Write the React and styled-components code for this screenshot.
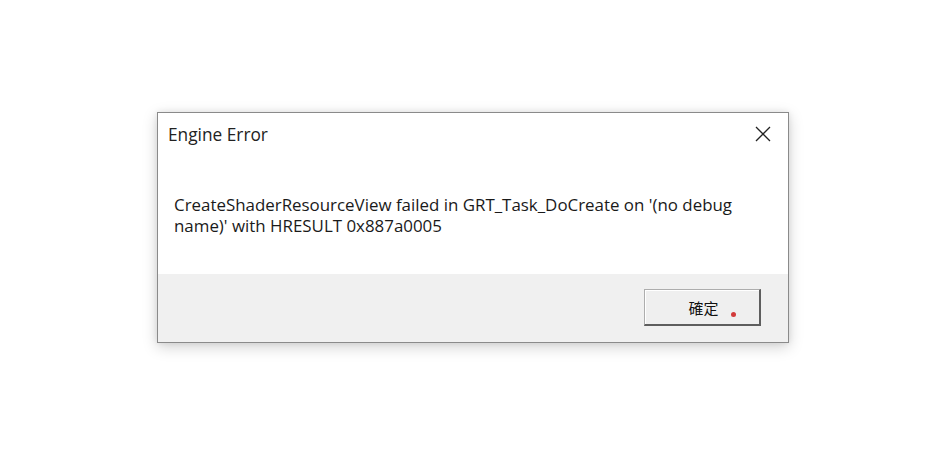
import React from "react";
import styled, { createGlobalStyle } from "styled-components";

const GlobalStyle = createGlobalStyle`
  html, body {
    margin: 0;
    padding: 0;
    background: #fff;
  }
  body {
    font-family: "Open Sans", "Noto Sans", "Noto Sans CJK TC", sans-serif;
  }
`;

function App() {
  return (
    <StPage>
      <GlobalStyle />
      <StDialog>
        <StBody>
          <StTitleBar>
            <StTitle>Engine Error</StTitle>
            <StCloseBtn aria-label="close">
              <svg width="16" height="16" viewBox="0 0 16 16">
                <path d="M1 1 L15 15 M15 1 L1 15" stroke="#222" strokeWidth="1.3" fill="none" />
              </svg>
            </StCloseBtn>
          </StTitleBar>
          <StMessage>
            CreateShaderResourceView failed in GRT_Task_DoCreate on '(no debug
            <br />
            name)' with HRESULT 0x887a0005
          </StMessage>
        </StBody>
        <StFooter>
          <StOkBtn>
            確定
            <StDot />
          </StOkBtn>
        </StFooter>
      </StDialog>
    </StPage>
  );
}

//styled-components
const StPage = styled.div`
  width: 944px;
  height: 455px;
  box-sizing: border-box;
  padding: 112px 0 0 157px;
`;

const StDialog = styled.div`
  width: 632px;
  height: 231px;
  box-sizing: border-box;
  border: 1px solid #8a8a8a;
  background: #f0f0f0;
  display: flex;
  flex-direction: column;
  box-shadow: 0 4px 14px rgba(0, 0, 0, 0.18), 0 0 6px rgba(0, 0, 0, 0.08);
`;

const StBody = styled.div`
  background: #fff;
  height: 161px;
  display: flex;
  flex-direction: column;
`;

const StTitleBar = styled.div`
  display: flex;
  justify-content: space-between;
  align-items: center;
  height: 42px;
  padding: 0 17px 0 10px;
`;

const StTitle = styled.div`
  font-size: 17.3px;
  color: #222;
`;

const StCloseBtn = styled.div`
  width: 16px;
  height: 16px;
  display: flex;
`;

const StMessage = styled.div`
  margin-top: 39px;
  padding-left: 16px;
  font-size: 16.9px;
  line-height: 21px;
  color: #1a1a1a;
`;

const StFooter = styled.div`
  flex: 1;
  display: flex;
  justify-content: flex-end;
  align-items: flex-start;
  padding: 15px 27px 0 0;
`;

const StOkBtn = styled.div`
  position: relative;
  width: 117px;
  height: 37px;
  box-sizing: border-box;
  border: 1px solid #adadad;
  border-right: 2px solid #5e5e5e;
  border-bottom: 2px solid #5e5e5e;
  background: #efefef;
  box-shadow: inset 1px 1px 0 #fff;
  display: flex;
  align-items: center;
  justify-content: center;
  padding-left: 3px;
  font-family: "Noto Sans CJK TC", sans-serif;
  font-size: 15px;
  color: #111;
`;

const StDot = styled.span`
  position: absolute;
  left: 86px;
  top: 22px;
  width: 5px;
  height: 5px;
  border-radius: 50%;
  background: #d23a3a;
`;

export default App;
